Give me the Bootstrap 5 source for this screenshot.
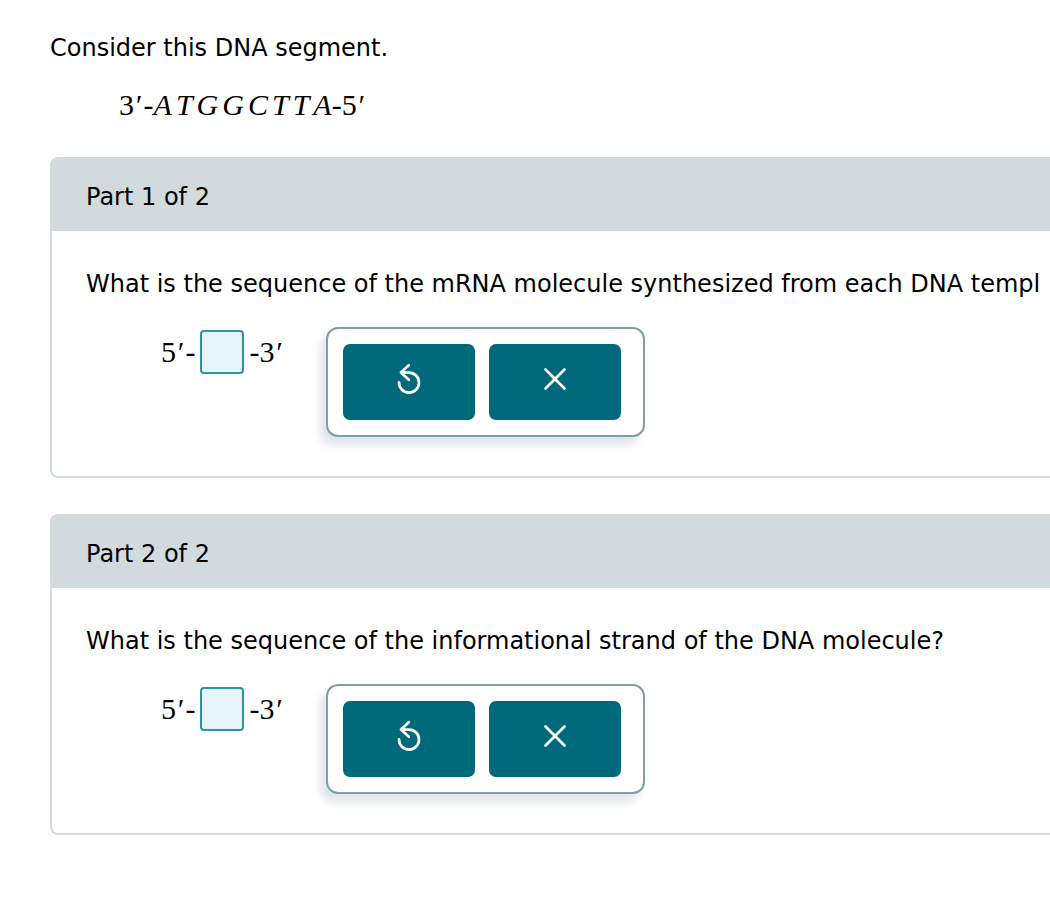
<!DOCTYPE html>
<html lang="en">
<head>
<meta charset="utf-8">
<meta name="viewport" content="width=device-width, initial-scale=1">
<title>DNA segment</title>
<link href="https://cdn.jsdelivr.net/npm/bootstrap@5.3.0/dist/css/bootstrap.min.css" rel="stylesheet">
<style>
  body { font: 24px/36px "DejaVu Sans", Verdana, sans-serif; color: #000; background: #fff; }
  .page { padding: 30px 0 48px 50px; }
  .formula { font: 30px/36px "Liberation Serif", "Times New Roman", serif; }
  .formula i { margin-right: 3px; }
  .segment { padding-left: 69px; margin: 21px 0 34px; }
  .bases { gap: 4px; }
  .part { border: 2px solid #d1dadd; border-right: 0; border-radius: 8px 0 0 8px; margin-bottom: 36px; }
  .card-header.part-title { background: #d1dadd; border: 0; border-radius: 0; padding: 20px 34px 16px; font-size: 24px; line-height: 36px; margin: 0; }
  .part-content { padding: 35px 0 39px 34px; }
  .answer-row { padding-left: 75px; margin-top: 25px; }
  .answer { padding-top: 3px; }
  .blank { width: 44px; height: 44px; padding: 4px; border: 2px solid #2c94a5; border-radius: 4px; background: #e5f4f9; margin: 0 6px 0 4px; }
  .tools { margin-left: 42px; padding: 15px 22px 15px 15px; gap: 14px; border: 2px solid #7f9fa8; border-radius: 12px; background: #fff; box-shadow: -6px 8px 10px #dfe6ea; }
  .tool { width: 132px; height: 76px; --bs-btn-bg: #00697c; --bs-btn-color: #fff; --bs-btn-hover-bg: #005767; --bs-btn-hover-color: #fff; --bs-btn-border-color: transparent; border: 0; border-radius: 7px; padding: 0 0 6px; }
</style>
</head>
<body>
<main class="page overflow-hidden">
  <p class="mb-0">Consider this DNA segment.</p>
  <div class="formula segment d-flex">
    <span>3<i>′</i>-</span>
    <span class="bases d-flex fst-italic"><span>A</span><span>T</span><span>G</span><span>G</span><span>C</span><span>T</span><span>T</span><span>A</span></span>
    <span>-5<i>′</i></span>
  </div>

  <section class="card part">
    <h2 class="card-header part-title">Part 1 of 2</h2>
    <div class="part-content overflow-hidden">
      <label class="d-block text-nowrap" for="answer1">What is the sequence of the mRNA molecule synthesized from each DNA templ</label>
      <div class="answer-row d-flex align-items-start">
        <div class="formula answer d-flex align-items-center">
          <span>5<i>′</i>-</span><input class="blank" id="answer1" type="text"><span>-3<i>′</i></span>
        </div>
        <div class="tools d-flex">
          <button class="btn tool d-flex align-items-center justify-content-center" type="button" aria-label="Reset">
            <svg width="26" height="32" viewBox="0 0 26 32" fill="none" stroke="#fff" stroke-width="2.7" stroke-linecap="round" stroke-linejoin="round"><path d="M12.8 2.2 5 9.6l7.8 7.2M5 9.6h8A10 10 0 1 1 3 19.3"/></svg>
          </button>
          <button class="btn tool d-flex align-items-center justify-content-center" type="button" aria-label="Clear">
            <svg width="24" height="24" viewBox="0 0 24 24" fill="none" stroke="#fff" stroke-width="2.7" stroke-linecap="round"><path d="m2.5 2.5 19 19m0-19-19 19"/></svg>
          </button>
        </div>
      </div>
    </div>
  </section>

  <section class="card part">
    <h2 class="card-header part-title">Part 2 of 2</h2>
    <div class="part-content overflow-hidden">
      <label class="d-block text-nowrap" for="answer2">What is the sequence of the informational strand of the DNA molecule?</label>
      <div class="answer-row d-flex align-items-start">
        <div class="formula answer d-flex align-items-center">
          <span>5<i>′</i>-</span><input class="blank" id="answer2" type="text"><span>-3<i>′</i></span>
        </div>
        <div class="tools d-flex">
          <button class="btn tool d-flex align-items-center justify-content-center" type="button" aria-label="Reset">
            <svg width="26" height="32" viewBox="0 0 26 32" fill="none" stroke="#fff" stroke-width="2.7" stroke-linecap="round" stroke-linejoin="round"><path d="M12.8 2.2 5 9.6l7.8 7.2M5 9.6h8A10 10 0 1 1 3 19.3"/></svg>
          </button>
          <button class="btn tool d-flex align-items-center justify-content-center" type="button" aria-label="Clear">
            <svg width="24" height="24" viewBox="0 0 24 24" fill="none" stroke="#fff" stroke-width="2.7" stroke-linecap="round"><path d="m2.5 2.5 19 19m0-19-19 19"/></svg>
          </button>
        </div>
      </div>
    </div>
  </section>
</main>
<script src="https://cdn.jsdelivr.net/npm/bootstrap@5.3.0/dist/js/bootstrap.bundle.min.js"></script>
</body>
</html>
